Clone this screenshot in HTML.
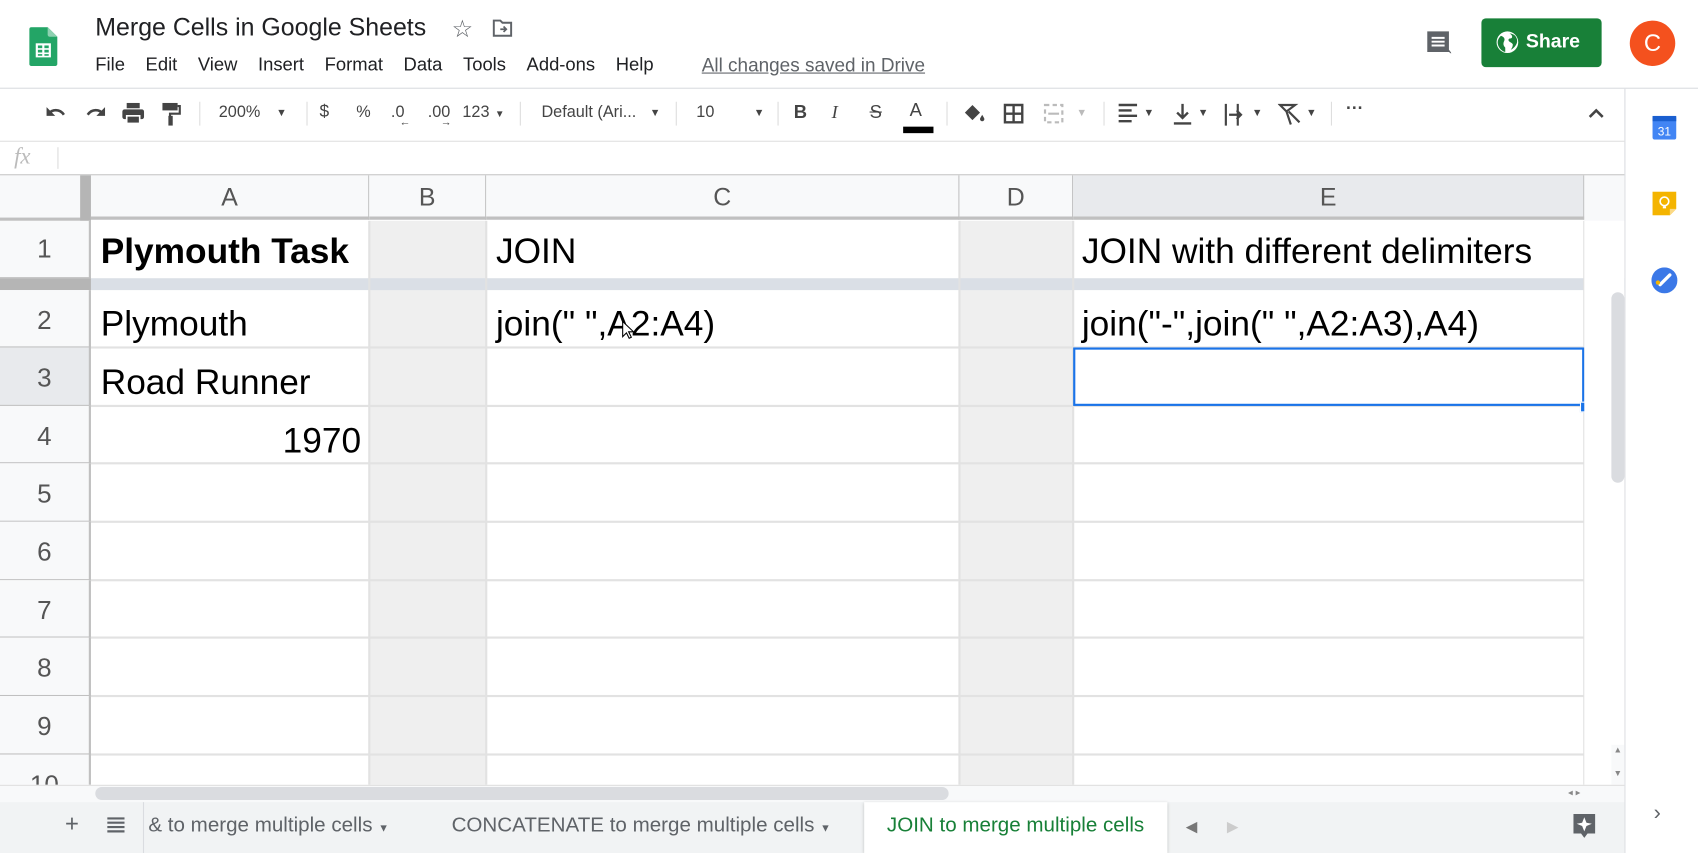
<!DOCTYPE html>
<html><head><meta charset="utf-8"><style>
html,body{margin:0;padding:0;width:1698px;height:853px;overflow:hidden;background:#fff;font-family:"Liberation Sans",Arial,sans-serif}
#w{position:absolute;left:0;top:0;width:1568px;height:788px;transform:scale(1.08291,1.0825);transform-origin:0 0;background:#fff}
.a{position:absolute}
.menu span{margin-right:19px}
.tb{position:absolute;top:95px;color:#444;font-size:15px}
.ic{position:absolute;top:95px}
.vl{position:absolute;top:94px;width:1px;height:22px;background:#ddd}
.ch{position:absolute;top:162px;height:41px;background:#f8f9fa;border-right:1px solid #c0c0c0;border-bottom:3px solid #c0c0c0;box-sizing:border-box;font-size:23px;color:#555;text-align:center;line-height:41px}
.rh{position:absolute;left:0;width:84px;background:#f8f9fa;border-bottom:1px solid #c0c0c0;box-sizing:border-box;font-size:24px;color:#555;text-align:center;border-right:2px solid #c0c0c0}
.hl{position:absolute;left:84px;width:1379px;height:2px;background:#e2e2e2}
.vg{position:absolute;top:204px;width:2px;height:521px;background:#e2e2e2}
.ct{position:absolute;font-size:32.6px;color:#000;white-space:nowrap}
.tab{position:absolute;top:752px;font-size:19px;color:#5f6368;white-space:nowrap}
</style></head><body><div id="w">
<svg class="a" style="left:27px;top:25px" width="26" height="36" viewBox="0 0 26 36"><path d="M2 0h15l9 9v25a2 2 0 0 1-2 2H2a2 2 0 0 1-2-2V2a2 2 0 0 1 2-2z" fill="#23a566"/><path d="M17 0l9 9h-7a2 2 0 0 1-2-2z" fill="#8ed1b1"/><rect x="6" y="15" width="14" height="13" fill="#fff"/><rect x="8" y="17" width="4" height="2.5" fill="#23a566"/><rect x="14" y="17" width="4" height="2.5" fill="#23a566"/><rect x="8" y="21" width="4" height="2.5" fill="#23a566"/><rect x="14" y="21" width="4" height="2.5" fill="#23a566"/><rect x="8" y="25" width="4" height="1.5" fill="#23a566"/><rect x="14" y="25" width="4" height="1.5" fill="#23a566"/></svg>
<div class="a" style="left:88px;top:12px;font-size:23px;color:#202124;white-space:nowrap">Merge Cells in Google Sheets</div>
<div class="a" style="left:417px;top:14px;font-size:22px;color:#5f6368">☆</div>
<svg class="a" style="left:454px;top:17px" width="20" height="18" viewBox="0 0 20 18"><path d="M2 2h6l2 2h8v12H2z" fill="none" stroke="#5f6368" stroke-width="1.8"/><path d="M8 10h5M11 7.5l2.5 2.5L11 12.5" fill="none" stroke="#5f6368" stroke-width="1.6"/></svg>
<div class="a menu" style="left:88px;top:50px;font-size:17px;color:#202124;white-space:nowrap"><span>File</span><span>Edit</span><span>View</span><span>Insert</span><span>Format</span><span>Data</span><span>Tools</span><span>Add-ons</span><span>Help</span></div>
<div class="a" style="left:648px;top:50px;font-size:17.5px;color:#5f6368;text-decoration:underline;white-space:nowrap">All changes saved in Drive</div>
<svg class="a" style="left:1316px;top:27px" width="24" height="26" viewBox="0 0 24 26"><path d="M2 2h20v17l4 5-4-3H2z" fill="#5f6368"/><path d="M6 8h12M6 11.5h12M6 15h12" stroke="#fff" stroke-width="1.8"/></svg>
<div class="a" style="left:1368px;top:17px;width:111px;height:45px;background:#188038;border-radius:4px"></div>
<svg class="a" style="left:1381px;top:28px" width="22" height="22" viewBox="0 0 22 22"><circle cx="11" cy="11" r="10" fill="#fff"/><path d="M5 5c3 1 4 3 3 5s-1 4 1 6l0 4c-4-1-7-5-7-9 0-2 1-4 3-6zM13 3c2 1 3 3 2 4s-3 0-3 2 3 2 4 4c0 2-1 4-2 5 3-1 6-5 6-8 0-4-3-7-7-7z" fill="#188038"/></svg>
<div class="a" style="left:1409px;top:28px;font-size:18px;font-weight:bold;color:#fff">Share</div>
<div class="a" style="left:1505px;top:19px;width:42px;height:42px;border-radius:50%;background:#f4511e;color:#fff;font-size:22px;text-align:center;line-height:42px">C</div>
<div class="a" style="left:0;top:81px;width:1568px;height:1px;background:#dadce0"></div>
<div class="a" style="left:1500px;top:82px;width:1px;height:706px;background:#dadce0"></div>
<svg class="a" style="left:1526px;top:107px" width="22" height="22" viewBox="0 0 22 22"><rect x="0" y="0" width="22" height="22" rx="2" fill="#4285f4"/><rect x="0" y="0" width="22" height="5" fill="#1a5fd0"/><text x="11" y="18" font-size="11" fill="#fff" text-anchor="middle" font-family="Liberation Sans">31</text></svg>
<svg class="a" style="left:1526px;top:177px" width="22" height="22" viewBox="0 0 22 22"><path d="M0 0h22v16l-6 6H0z" fill="#f4b400"/><path d="M16 22v-6h6z" fill="#fbd985"/><circle cx="11" cy="9" r="4" fill="none" stroke="#fff" stroke-width="1.5"/><path d="M9.5 13.5h3v2h-3z" fill="#fff"/></svg>
<svg class="a" style="left:1525px;top:247px" width="24" height="24" viewBox="0 0 24 24"><circle cx="12" cy="12" r="12" fill="#3b78e7"/><path d="M8 16l9-9" stroke="#fff" stroke-width="3" stroke-linecap="round"/><circle cx="6" cy="14" r="2" fill="#f4b400"/></svg>
<div class="a" style="left:1527px;top:740px;font-size:20px;color:#5f6368">›</div>
<svg class="ic" style="left:41px" width="22" height="20" viewBox="0 0 22 20"><path d="M4 10c3-4 10-5 14 1" fill="none" stroke="#444" stroke-width="2.4"/><path d="M2 4v8h8z" fill="#444"/></svg>
<svg class="ic" style="left:77px" width="22" height="20" viewBox="0 0 22 20"><path d="M18 10c-3-4-10-5-14 1" fill="none" stroke="#444" stroke-width="2.4"/><path d="M20 4v8h-8z" fill="#444"/></svg>
<svg class="ic" style="left:112px" width="22" height="20" viewBox="0 0 22 20"><rect x="5" y="0" width="12" height="5" fill="#444"/><rect x="1" y="6" width="20" height="9" rx="2" fill="#444"/><rect x="5" y="12" width="12" height="7" fill="#444" stroke="#fff" stroke-width="1.5"/></svg>
<svg class="ic" style="left:148px" width="20" height="22" viewBox="0 0 20 22"><rect x="2" y="0" width="14" height="7" fill="#444"/><path d="M16 3h2v7h-9v3" fill="none" stroke="#444" stroke-width="2"/><rect x="7.5" y="12" width="4" height="9" fill="#444"/></svg>
<div class="vl" style="left:184px"></div>
<div class="tb" style="left:202px">200%</div><div class="tb" style="left:255px;font-size:10px;top:99px">▼</div>
<div class="vl" style="left:283px"></div>
<div class="tb" style="left:295px;font-size:16px">$</div>
<div class="tb" style="left:329px">%</div>
<div class="tb" style="left:361px">.0</div><div class="tb" style="left:369px;top:108px;font-size:10px">←</div>
<div class="tb" style="left:395px">.00</div><div class="tb" style="left:407px;top:108px;font-size:10px">→</div>
<div class="tb" style="left:427px">123</div><div class="tb" style="left:457px;font-size:9px;top:100px">▼</div>
<div class="vl" style="left:480px"></div>
<div class="tb" style="left:500px">Default (Ari...</div><div class="tb" style="left:600px;font-size:10px;top:99px">▼</div>
<div class="vl" style="left:624px"></div>
<div class="tb" style="left:643px">10</div><div class="tb" style="left:696px;font-size:10px;top:99px">▼</div>
<div class="vl" style="left:718px"></div>
<div class="tb" style="left:733px;font-size:17px;font-weight:bold;top:94px">B</div>
<div class="tb" style="left:768px;font-size:17px;font-style:italic;top:94px;font-family:'Liberation Serif'">I</div>
<div class="tb" style="left:803px;font-size:17px;top:94px;text-decoration:line-through">S</div>
<div class="tb" style="left:840px;font-size:17px;top:92px">A</div>
<div class="a" style="left:834px;top:117px;width:28px;height:6px;background:#000"></div>
<div class="vl" style="left:874px"></div>
<svg class="ic" style="left:888px" width="22" height="20" viewBox="0 0 22 20"><path d="M3 9l7-7 7 7-7 7z" fill="#444"/><path d="M19 11c-1 2-2 3-2 4a2 2 0 0 0 4 0c0-1-1-2-2-4z" fill="#444"/></svg>
<svg class="ic" style="left:926px" width="20" height="20" viewBox="0 0 20 20"><path d="M2 2h16v16H2zM10 2v16M2 10h16" fill="none" stroke="#444" stroke-width="2.2"/></svg>
<svg class="ic" style="left:963px" width="20" height="20" viewBox="0 0 20 20"><path d="M2 2h16v16H2z" fill="none" stroke="#bbb" stroke-width="2" stroke-dasharray="4 3"/><path d="M5 10h10" stroke="#bbb" stroke-width="2"/></svg>
<div class="tb" style="left:994px;font-size:10px;top:99px;color:#bbb">▼</div>
<div class="vl" style="left:1019px"></div>
<svg class="ic" style="left:1032px" width="20" height="20" viewBox="0 0 20 20"><path d="M1 2h17M1 7h12M1 12h17M1 17h12" stroke="#444" stroke-width="2.2"/></svg>
<div class="tb" style="left:1056px;font-size:10px;top:99px">▼</div>
<svg class="ic" style="left:1082px" width="20" height="22" viewBox="0 0 20 22"><path d="M10 1v12M5 9l5 5 5-5M2 19h16" fill="none" stroke="#444" stroke-width="2.2"/></svg>
<div class="tb" style="left:1106px;font-size:10px;top:99px">▼</div>
<svg class="ic" style="left:1130px" width="22" height="22" viewBox="0 0 22 22"><path d="M2 1v20M13 1v20M5 11h10M12 7l4 4-4 4" fill="none" stroke="#444" stroke-width="2"/></svg>
<div class="tb" style="left:1156px;font-size:10px;top:99px">▼</div>
<svg class="ic" style="left:1180px" width="22" height="22" viewBox="0 0 22 22"><path d="M2 2h14l-8 6zM8 8l4 12M10 8l10 10" fill="none" stroke="#444" stroke-width="2"/></svg>
<div class="tb" style="left:1206px;font-size:10px;top:99px">▼</div>
<div class="vl" style="left:1229px"></div>
<div class="tb" style="left:1243px;font-weight:bold;top:92px;font-size:16px">···</div>
<svg class="ic" style="left:1466px;top:99px" width="16" height="10" viewBox="0 0 16 10"><path d="M2 9l6-6 6 6" fill="none" stroke="#444" stroke-width="2.4"/></svg>
<div class="a" style="left:0;top:130px;width:1500px;height:1px;background:#e0e0e0"></div>
<div class="a" style="left:13px;top:132px;font-size:21px;color:#bbb;font-style:italic;font-family:'Liberation Serif'">fx</div>
<div class="a" style="left:53px;top:136px;width:1px;height:20px;background:#ddd"></div>
<div class="a" style="left:0;top:161px;width:1500px;height:1px;background:#c0c0c0"></div>
<div class="a" style="left:84px;top:204px;width:1379px;height:521px;background:#fff"></div>
<div class="a" style="left:341px;top:204px;width:108px;height:521px;background:#efefef"></div>
<div class="a" style="left:886px;top:204px;width:105px;height:521px;background:#efefef"></div>
<div class="a" style="left:0;top:162px;width:84px;height:42px;background:#f8f9fa;border-bottom:3px solid #c0c0c0;box-sizing:border-box"></div>
<div class="a" style="left:74px;top:162px;width:10px;height:42px;background:#b5b5b5"></div>
<div class="ch" style="left:84px;width:257px">A</div>
<div class="ch" style="left:341px;width:108px">B</div>
<div class="ch" style="left:449px;width:437px">C</div>
<div class="ch" style="left:886px;width:105px">D</div>
<div class="ch" style="left:991px;width:472px;background:#e8eaed">E</div>
<div class="a" style="left:1463px;top:162px;width:37px;height:42px;background:#f8f9fa"></div>
<div class="rh" style="top:204px;height:53px;line-height:53px">1</div>
<div class="a" style="left:0;top:257px;width:84px;height:11px;background:#b5b5b5"></div>
<div class="a" style="left:84px;top:257px;width:1416px;height:11px;background:#dadfe6"></div>
<div class="rh" style="top:268px;height:53px;line-height:58px">2</div>
<div class="rh" style="top:321px;height:54px;line-height:58px;background:#e8eaed">3</div>
<div class="rh" style="top:375px;height:53px;line-height:58px">4</div>
<div class="rh" style="top:428px;height:54px;line-height:58px">5</div>
<div class="rh" style="top:482px;height:54px;line-height:58px">6</div>
<div class="rh" style="top:536px;height:53px;line-height:58px">7</div>
<div class="rh" style="top:589px;height:54px;line-height:58px">8</div>
<div class="rh" style="top:643px;height:54px;line-height:58px">9</div>
<div class="rh" style="top:697px;height:28px;line-height:58px;overflow:hidden;border-bottom:none">10</div>
<div class="hl" style="top:320px"></div><div class="hl" style="top:374px"></div><div class="hl" style="top:427px"></div><div class="hl" style="top:481px"></div><div class="hl" style="top:535px"></div><div class="hl" style="top:588px"></div><div class="hl" style="top:642px"></div><div class="hl" style="top:696px"></div>
<div class="vg" style="left:340px"></div><div class="vg" style="left:448px"></div><div class="vg" style="left:885px"></div><div class="vg" style="left:990px"></div><div class="vg" style="left:1462px"></div>
<div class="ct" style="left:93px;top:213px;font-weight:bold">Plymouth Task</div>
<div class="ct" style="left:458px;top:213px">JOIN</div>
<div class="ct" style="left:999px;top:213px">JOIN with different delimiters</div>
<div class="ct" style="left:93px;top:280px">Plymouth</div>
<div class="ct" style="left:458px;top:280px">join(" ",A2:A4)</div>
<div class="ct" style="left:999px;top:280px">join("-",join(" ",A2:A3),A4)</div>
<div class="ct" style="left:93px;top:334px">Road Runner</div>
<div class="ct" style="left:261px;top:388px">1970</div>
<svg class="a" style="left:574px;top:296px" width="12" height="18" viewBox="0 0 12 18"><path d="M1 1v14l3.5-3.5 2.5 5 2-1-2.5-5H11z" fill="#fff" stroke="#000" stroke-width="1"/></svg>
<div class="a" style="left:991px;top:321px;width:472px;height:54px;border:2px solid #1a73e8;box-sizing:border-box"></div>
<div class="a" style="left:1459px;top:371px;width:8px;height:8px;background:#1a73e8;border:1px solid #fff"></div>
<div class="a" style="left:1463px;top:204px;width:37px;height:521px;background:#fff"></div>
<div class="a" style="left:1488px;top:270px;width:12px;height:176px;background:#dadce0;border-radius:6px"></div>
<div class="a" style="left:1488px;top:688px;width:12px;height:37px;background:#f8f9fa"></div>
<div class="a" style="left:1490px;top:688px;font-size:8px;color:#888">▲</div>
<div class="a" style="left:1490px;top:710px;font-size:8px;color:#888">▼</div>
<div class="a" style="left:0;top:725px;width:1500px;height:16px;background:#f8f9fa;border-top:1px solid #e0e0e0"></div>
<div class="a" style="left:88px;top:727px;width:788px;height:12px;background:#dadce0;border-radius:6px"></div>
<div class="a" style="left:1448px;top:727px;font-size:9px;color:#888">◂ ▸</div>
<div class="a" style="left:0;top:741px;width:1500px;height:47px;background:#f1f3f4"></div>
<div class="a" style="left:60px;top:748px;font-size:22px;color:#5f6368">+</div>
<svg class="a" style="left:99px;top:755px" width="16" height="14" viewBox="0 0 16 14"><path d="M0 1h16M0 5h16M0 9h16M0 13h16" stroke="#5f6368" stroke-width="2"/></svg>
<div class="a" style="left:132px;top:741px;width:1px;height:47px;background:#dadce0"></div>
<div class="tab" style="left:137px">&amp; to merge multiple cells <span style="font-size:10px">▼</span></div>
<div class="tab" style="left:417px">CONCATENATE to merge multiple cells <span style="font-size:10px">▼</span></div>
<div class="a" style="left:798px;top:741px;width:280px;height:47px;background:#fff;box-shadow:0 1px 3px rgba(0,0,0,.2)"></div>
<div class="tab" style="left:819px;color:#188038">JOIN to merge multiple cells</div>
<div class="tab" style="left:1095px;font-size:14px;color:#777;top:755px">◀</div>
<div class="tab" style="left:1133px;font-size:14px;color:#ccc;top:755px">▶</div>
<svg class="a" style="left:1452px;top:751px" width="22" height="24" viewBox="0 0 22 24"><path d="M1 1h20v18h-7l-3 4-3-4H1z" fill="#5f6368"/><path d="M11 4l2 5 5 1-5 2-2 5-2-5-5-2 5-1z" fill="#fff"/></svg>
</div></body></html>
